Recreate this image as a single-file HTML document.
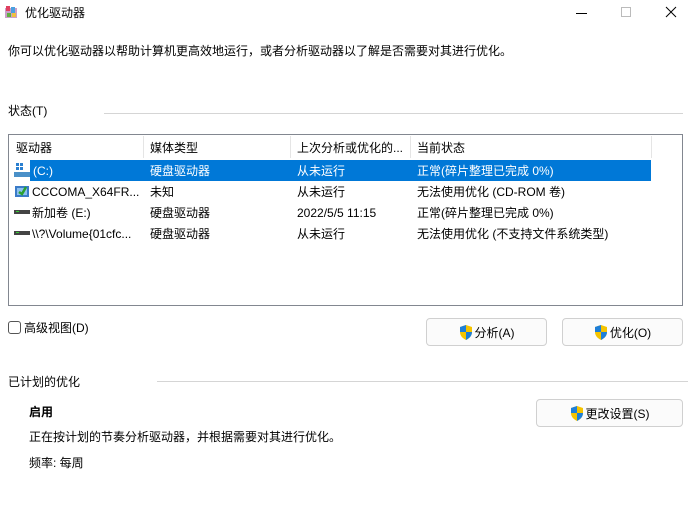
<!DOCTYPE html>
<html><head><meta charset="utf-8"><style>
*{margin:0;padding:0;box-sizing:border-box}
body{width:688px;height:509px;background:#fff;font-family:"Liberation Sans","Noto Sans CJK SC",sans-serif;font-size:12px;color:#000;position:relative;overflow:hidden}
.a{position:absolute;white-space:nowrap;line-height:16px}
.btn{position:absolute;border:1px solid #d0d0d0;border-radius:4px;background:#fbfbfb;display:flex;align-items:center;justify-content:center;gap:2px}
.hl{position:absolute;height:1px;background:#d5d5d5}
.vd{position:absolute;top:136px;width:1px;height:22px;background:#e5e5e5}
</style></head><body>
<svg class="a" style="left:5px;top:5px" width="13" height="14" viewBox="0 0 13 14"><rect x="0" y="3" width="12" height="10" fill="#c9a0c8"/><rect x="1" y="1" width="4" height="5" fill="#e04060"/><rect x="6" y="2" width="4" height="6" fill="#4aa0e0"/><rect x="2" y="8" width="4" height="4" fill="#60b040"/><rect x="7" y="8" width="4" height="4" fill="#f0c040"/></svg>
<div class="a" style="left:25px;top:5px">优化驱动器</div>
<div class="a" style="left:576px;top:13px;width:11px;height:1px;background:#000"></div>
<div class="a" style="left:621px;top:7px;width:10px;height:10px;border:1px solid #bbb"></div>
<svg class="a" style="left:665px;top:6px" width="12" height="12"><path d="M1 1L11 11M11 1L1 11" stroke="#000" stroke-width="1"/></svg>
<div class="a" style="left:8px;top:43px">你可以优化驱动器以帮助计算机更高效地运行，或者分析驱动器以了解是否需要对其进行优化。</div>
<div class="a" style="left:8px;top:103px">状态(T)</div>
<div class="hl" style="left:104px;top:113px;width:579px"></div>
<div class="a" style="left:8px;top:134px;width:675px;height:172px;border:1px solid #828790"></div>
<div class="a" style="left:16px;top:140px">驱动器</div>
<div class="a" style="left:150px;top:140px">媒体类型</div>
<div class="a" style="left:297px;top:140px">上次分析或优化的...</div>
<div class="a" style="left:417px;top:140px">当前状态</div>
<div class="vd" style="left:143px"></div><div class="vd" style="left:290px"></div><div class="vd" style="left:410px"></div><div class="vd" style="left:651px"></div>
<div class="a" style="left:30px;top:160px;width:621px;height:21px;background:#0078d7"></div>
<svg class="a" style="left:14px;top:162px" width="16" height="16"><rect x="2" y="1" width="3" height="3" fill="#2a7fd0"/><rect x="6" y="1" width="3" height="3" fill="#2a7fd0"/><rect x="2" y="5" width="3" height="3" fill="#2a7fd0"/><rect x="6" y="5" width="3" height="3" fill="#2a7fd0"/><rect x="0" y="10" width="16" height="5" fill="#4a90c8"/></svg>
<div class="a" style="left:33px;top:163px;color:#fff">(C:)</div>
<div class="a" style="left:150px;top:163px;color:#fff">硬盘驱动器</div>
<div class="a" style="left:297px;top:163px;color:#fff">从未运行</div>
<div class="a" style="left:417px;top:163px;color:#fff">正常(碎片整理已完成 0%)</div>
<svg class="a" style="left:14px;top:183px" width="16" height="16"><rect x="1" y="3" width="14" height="11" fill="#3a7bc8"/><rect x="3" y="5" width="10" height="7" fill="#8cc0ee"/><path d="M5 9L8 11L12 4" stroke="#2aa030" stroke-width="2.5" fill="none"/></svg>
<div class="a" style="left:32px;top:184px">CCCOMA_X64FR...</div>
<div class="a" style="left:150px;top:184px">未知</div>
<div class="a" style="left:297px;top:184px">从未运行</div>
<div class="a" style="left:417px;top:184px">无法使用优化 (CD-ROM 卷)</div>
<svg class="a" style="left:14px;top:208px" width="16" height="8"><rect x="0" y="2" width="16" height="4" fill="#444"/><rect x="2" y="3" width="3" height="1" fill="#3c3"/></svg>
<div class="a" style="left:32px;top:205px">新加卷 (E:)</div>
<div class="a" style="left:150px;top:205px">硬盘驱动器</div>
<div class="a" style="left:297px;top:205px">2022/5/5 11:15</div>
<div class="a" style="left:417px;top:205px">正常(碎片整理已完成 0%)</div>
<svg class="a" style="left:14px;top:229px" width="16" height="8"><rect x="0" y="2" width="16" height="4" fill="#444"/><rect x="2" y="3" width="3" height="1" fill="#3c3"/></svg>
<div class="a" style="left:32px;top:226px">\\?\Volume{01cfc...</div>
<div class="a" style="left:150px;top:226px">硬盘驱动器</div>
<div class="a" style="left:297px;top:226px">从未运行</div>
<div class="a" style="left:417px;top:226px">无法使用优化 (不支持文件系统类型)</div>
<div class="a" style="left:8px;top:321px;width:13px;height:13px;border:1px solid #555;border-radius:3px"></div>
<div class="a" style="left:24px;top:320px">高级视图(D)</div>
<div class="btn" style="left:426px;top:318px;width:121px;height:28px"><svg width="14" height="15" viewBox="0 0 14 15"><path d="M7 0L13 2V7C13 11 10 13.5 7 15C4 13.5 1 11 1 7V2Z" fill="#f5c400"/><path d="M7 0V7H1V2ZM7 7H13V7C13 11 10 13.5 7 15Z" fill="#1e7fd8"/></svg>分析(A)</div>
<div class="btn" style="left:562px;top:318px;width:121px;height:28px"><svg width="14" height="15" viewBox="0 0 14 15"><path d="M7 0L13 2V7C13 11 10 13.5 7 15C4 13.5 1 11 1 7V2Z" fill="#f5c400"/><path d="M7 0V7H1V2ZM7 7H13V7C13 11 10 13.5 7 15Z" fill="#1e7fd8"/></svg>优化(O)</div>
<div class="hl" style="left:157px;top:381px;width:531px"></div>
<div class="a" style="left:8px;top:374px">已计划的优化</div>
<div class="a" style="left:29px;top:404px;font-weight:bold">启用</div>
<div class="btn" style="left:536px;top:399px;width:147px;height:28px"><svg width="14" height="15" viewBox="0 0 14 15"><path d="M7 0L13 2V7C13 11 10 13.5 7 15C4 13.5 1 11 1 7V2Z" fill="#f5c400"/><path d="M7 0V7H1V2ZM7 7H13V7C13 11 10 13.5 7 15Z" fill="#1e7fd8"/></svg>更改设置(S)</div>
<div class="a" style="left:29px;top:429px">正在按计划的节奏分析驱动器，并根据需要对其进行优化。</div>
<div class="a" style="left:29px;top:455px">频率: 每周</div>
</body></html>
